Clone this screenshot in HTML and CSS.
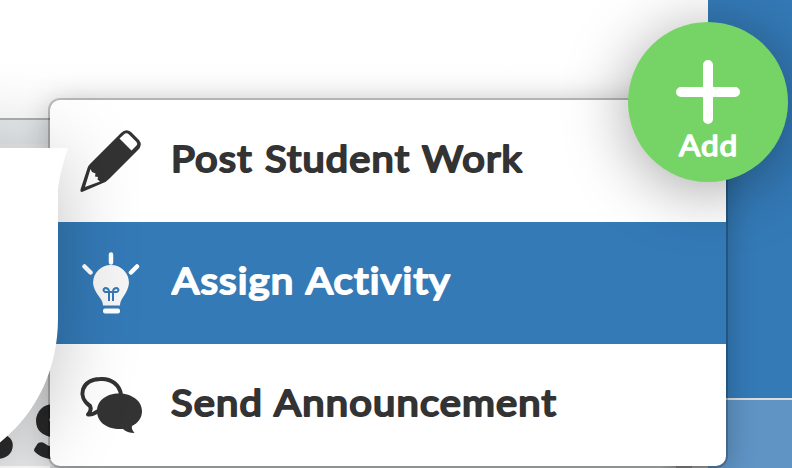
FILE: index.html
```html
<!DOCTYPE html>
<html lang="en">
<head>
<meta charset="utf-8">
<title>Add menu</title>
<link rel="stylesheet" href="styles.css">
</head>
<body>
<div class="screen">
  <div class="page">
    <div class="main">
      <div class="topbar"></div>
      <div class="content"></div>
      <div class="strip"></div>
    </div>
    <div class="side">
      <div class="side-top"></div>
      <div class="side-bottom"></div>
    </div>
  </div>
  <svg class="heading" width="100" height="73"><text x="-17" y="61">s</text><text x="35" y="61">S</text></svg>
  <div class="menu">
    <div class="item">
      <svg class="icon" viewBox="0 0 66 66"><path fill="#333" fill-rule="evenodd" d="M4 64Q2 64 2.500 61.500L9.500 40Q10 38 12 36L43 5Q48 0 53 4L61 12Q65 17 60 22L31 51Q28 54 25 55ZM41.500 10.500L53.500 22.500L58.500 17.500Q60 16 58.500 14L51 6.500Q49 4.500 47 5.500ZM12.500 41L7 59L22 53.500L19.500 51.500L20 49L17 48.500L17.500 45.500L14 44Z"/></svg>
      <svg class="label" height="60"><text x="0" y="41" textLength="352" lengthAdjust="spacingAndGlyphs">Post Student Work</text></svg>
    </div>
    <div class="item selected">
      <svg class="icon" viewBox="0 0 66 66"><path d="M33 4.500v8M6.500 16.500l6 6M59 16.500l-6 6" stroke="#fff" stroke-width="4.500" stroke-linecap="round"/><path fill="#f6f6f6" d="M25 55.500C25 48 16 44 15 33A18 18 0 0 1 51 33C50 44 42 48 42 55.500Z"/><rect x="25" y="58.500" width="17" height="5" rx="2" fill="#fff"/><path fill="none" stroke="#347ab7" stroke-width="2" d="M31 51V42Q31 38 27 38Q24 40 27 42H39Q42 40 39 38Q35 38 35 42V51"/></svg>
      <svg class="label" height="60"><text x="1" y="41" textLength="279" lengthAdjust="spacingAndGlyphs">Assign Activity</text></svg>
    </div>
    <div class="item">
      <svg class="icon" viewBox="0 0 66 66"><path fill="none" stroke="#333" stroke-width="4" stroke-linejoin="round" d="M20 39Q15 43 10 42.500Q14 38 12 34C-1 25 3 8 22 7C33 6 42 13 43 23"/><path fill="#333" d="M41 21.500C54 21.500 64 29 64 39C64 46 60 51 54 54Q53 57 56.500 61Q49 61 45 57C29 58 19 50 19 39C19 29 28 21.500 41 21.500Z"/></svg>
      <svg class="label" height="60"><text x="0" y="41" textLength="386" lengthAdjust="spacingAndGlyphs">Send Announcement</text></svg>
    </div>
  </div>
  <svg class="sheet" width="200" height="468"><path d="M-100 148H68Q61 168 58 188V318C58 370 36 412 4 439L-4 446H-100Z"/></svg>
  <div class="add">
    <svg class="plus" viewBox="0 0 64 64"><path d="M32 5v54M5 32h54"/></svg>
    <svg class="add-label" width="80" height="36"><text x="11" y="22.500" textLength="59" lengthAdjust="spacingAndGlyphs">Add</text></svg>
  </div>
</div>
</body>
</html>
```
FILE: styles.css
```css
body { margin: 0; }
.screen { position: relative; width: 792px; height: 468px; overflow: hidden; font-family: Lato, sans-serif; font-variant-ligatures: none; }
.page { display: flex; height: 468px; }
.main { width: 708px; display: flex; flex-direction: column; }
.topbar { height: 118px; background: linear-gradient(#fff 50%, #f9f9f9); border-bottom: 2px solid #aeb0b0; }
.content { flex: 1; background: linear-gradient(#e3e7ea 0 24px, #e9eaeb 24px); }
.strip { height: 2px; margin-left: 50px; background: linear-gradient(90deg, #d8d9da 610px, #bbb 626px, #999 626px 642px, #bbb 642px); }
.side { flex: 1; display: flex; flex-direction: column; }
.side-top { height: 398px; background: #347ab7; border-bottom: 2px solid #ddd; }
.side-bottom { flex: 1; background: #5f94c5; }
.heading { position: absolute; left: 0; top: 395px; }
.heading text { font-size: 67px; font-weight: 700; fill: #2b2b2b; stroke: #2b2b2b; stroke-width: 5; stroke-linejoin: round; }
.menu { position: absolute; left: 50px; top: 100px; width: 676px; height: 366px; background: #fff; border-radius: 10px; box-shadow: 0 0 0 2px rgba(0,0,0,.2), 0 4px 30px rgba(0,0,0,.28); }
.item { display: flex; align-items: center; height: 122px; padding-left: 28px; gap: 27px; box-sizing: border-box; }
.selected { background: #347ab7; }
.icon { width: 66px; height: 66px; flex: none; }
.label { flex: 1; }
.label text { font-size: 37.5px; letter-spacing: 1.1px; word-spacing: 1px; fill: #333; stroke: #333; stroke-width: 2.2; stroke-linejoin: round; }
.selected .label text { fill: #fff; stroke: #fff; }
.sheet { position: absolute; left: 0; top: 0; overflow: visible; filter: drop-shadow(0 10px 40px rgba(0,0,0,.24)); }
.sheet path { fill: #fff; }
.add { position: absolute; left: 628px; top: 22px; width: 160px; height: 160px; border-radius: 50%; background: #76d467; display: flex; flex-direction: column; align-items: center; box-shadow: 0 8px 64px rgba(0,0,0,.36); }
.plus { width: 64px; height: 64px; margin-top: 38px; flex: none; }
.plus path { stroke: #fff; stroke-width: 10; stroke-linecap: round; }
.add-label { margin-top: 9px; flex: none; }
.add-label text { font-size: 29px; letter-spacing: .8px; fill: #fff; stroke: #fff; stroke-width: 1.5; stroke-linejoin: round; }
```
